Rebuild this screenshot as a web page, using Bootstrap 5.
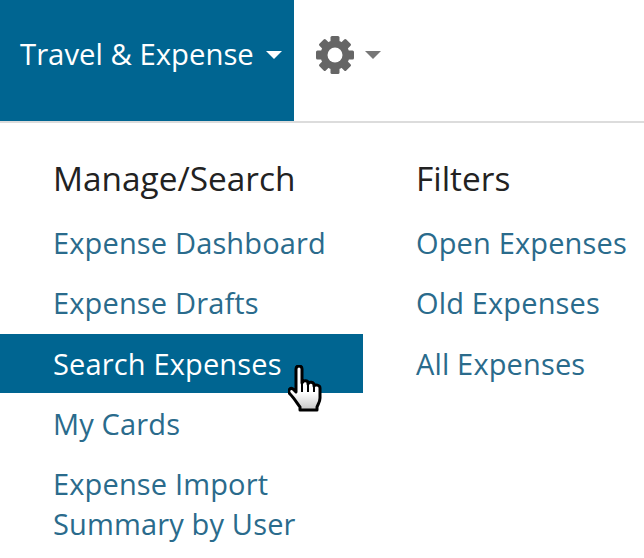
<!DOCTYPE html>
<html lang="en">
<head>
    <meta charset="UTF-8">
    <title>Travel &amp; Expense</title>
    <meta name="viewport" content="width=device-width, initial-scale=1">
    <link href="https://cdn.jsdelivr.net/npm/bootstrap@5.3.0/dist/css/bootstrap.min.css" rel="stylesheet">
    <style>
        html, body { height: 558px; overflow: hidden; background: #fff; }
        body { font-family: "Open Sans", sans-serif; font-size: 29px; }
        .top-bar { height: 123px; border-bottom: 2px solid #dcdcdc; }
        .top-tab { width: 294px; background: #006591; color: #fff; padding: 0 0 12px 20px; font-size: 29.3px; text-decoration: none; gap: 12px; }
        .top-tab:hover { color: #fff; }
        .caret-down { width: 0; height: 0; border-left: 8px solid transparent; border-right: 8px solid transparent; border-top: 8px solid currentColor; }
        .gear-tab { padding: 0 0 12px 21px; color: #777; gap: 10px; }
        .menu-col-a { width: 363px; padding-top: 33px; }
        .menu-col-b { padding-top: 33px; }
        .menu-head { font-size: 33.4px; line-height: 44px; color: #222; padding-left: 53px; margin-bottom: 13px; }
        .menu-link { display: block; padding: 10px 0 10px 53px; line-height: 40px; color: #2a6b8c; text-decoration: none; white-space: nowrap; letter-spacing: .15px; }
        .menu-link.third-row { margin-top: 1px; }
        .menu-link.is-active { background: #006591; color: #fff; padding-bottom: 9px; margin-bottom: 1px; }
        .menu-link.two-line { padding-bottom: 0; }
        .hand-cursor { position: absolute; left: 288px; top: 365px; }
    </style>
</head>
<body class="position-relative">
<div class="top-bar d-flex">
    <a href="#" class="top-tab d-flex align-items-center">
        <span>Travel &amp; Expense</span>
        <span class="caret-down"></span>
    </a>
    <div class="gear-tab d-flex align-items-center">
        <svg width="40" height="40" viewBox="0 0 40 40" aria-hidden="true">
            <g fill="#666">
                <rect x="15.5" y="1" width="9" height="38" rx="1.5"/>
                <rect x="15.5" y="1" width="9" height="38" rx="1.5" transform="rotate(45 20 20)"/>
                <rect x="15.5" y="1" width="9" height="38" rx="1.5" transform="rotate(90 20 20)"/>
                <rect x="15.5" y="1" width="9" height="38" rx="1.5" transform="rotate(135 20 20)"/>
                <circle cx="20" cy="20" r="14.5"/>
            </g>
            <circle cx="20" cy="20" r="7.5" fill="#fff"/>
        </svg>
        <span class="caret-down"></span>
    </div>
</div>
<div class="d-flex">
    <div class="menu-col-a">
        <div class="menu-head">Manage/Search</div>
        <a href="#" class="menu-link">Expense Dashboard</a>
        <a href="#" class="menu-link">Expense Drafts</a>
        <a href="#" class="menu-link third-row is-active">Search Expenses</a>
        <a href="#" class="menu-link">My Cards</a>
        <a href="#" class="menu-link two-line">Expense Import<br>Summary by User</a>
    </div>
    <div class="menu-col-b">
        <div class="menu-head">Filters</div>
        <a href="#" class="menu-link">Open Expenses</a>
        <a href="#" class="menu-link">Old Expenses</a>
        <a href="#" class="menu-link third-row">All Expenses</a>
    </div>
</div>
<svg class="hand-cursor" width="38" height="50" viewBox="0 0 38 50" aria-hidden="true">
    <defs>
        <linearGradient id="handFill" x1="0" y1="0" x2="0" y2="1">
            <stop offset="0" stop-color="#fff"/>
            <stop offset=".6" stop-color="#fff"/>
            <stop offset="1" stop-color="#c4c4c4"/>
        </linearGradient>
    </defs>
    <path d="M8 4c0-4 6-4 6 0v14c1-3 6-3 6 0v1c1-3 6-2 6 1v1c1-2 6-1 6 2v10c0 4-2 6-3 9v3H12v-3C9 38 6 33 2 29c-3-3 0-7 3-5l3 3z" fill="url(#handFill)" stroke="#000" stroke-width="3" stroke-linejoin="round"/>
    <path d="M14 18v9M20 19v8M26 21v6" stroke="#000" stroke-width="2" fill="none"/>
</svg>
<script src="https://cdn.jsdelivr.net/npm/bootstrap@5.3.0/dist/js/bootstrap.bundle.min.js"></script>
</body>
</html>
